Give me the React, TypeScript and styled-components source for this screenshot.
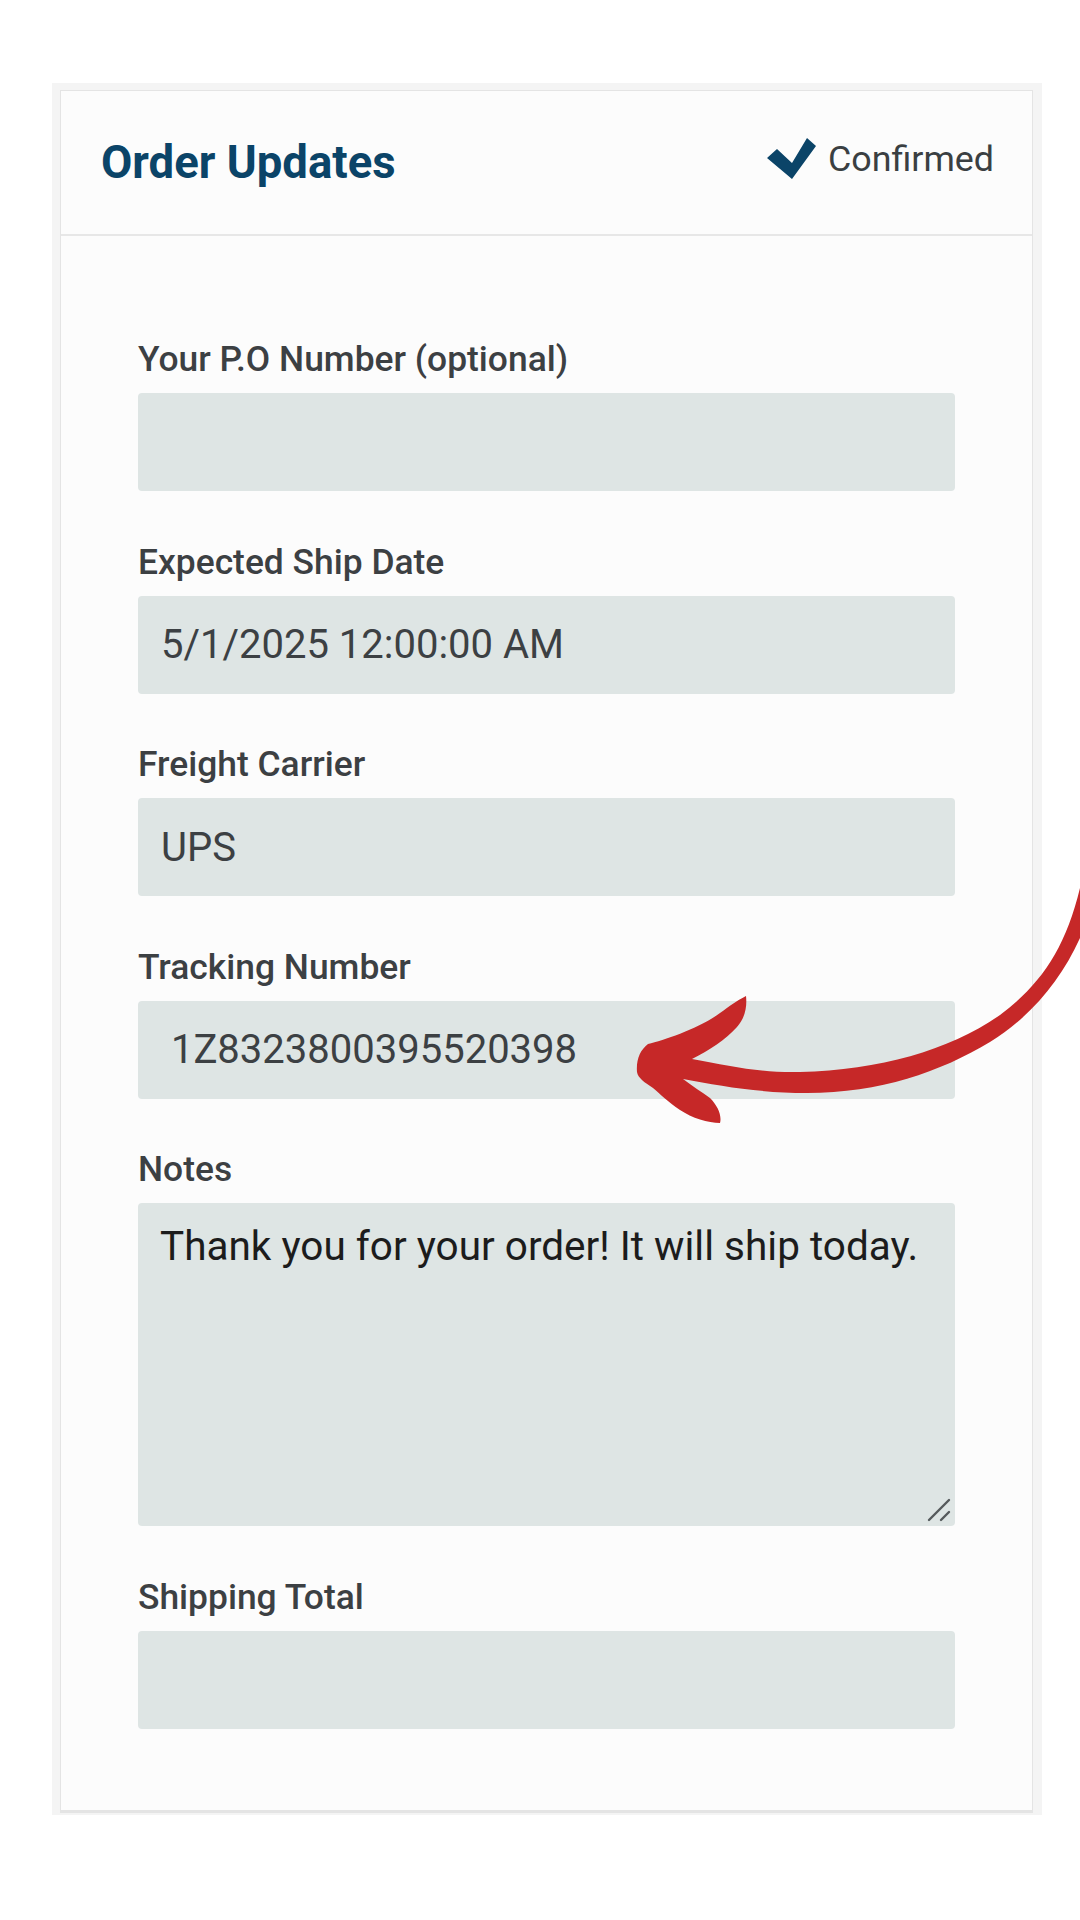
import React from 'react';
import styled, { createGlobalStyle } from 'styled-components';

const GlobalStyle = createGlobalStyle`
  html, body {
    margin: 0;
    padding: 0;
    background: #ffffff;
  }
  body {
    font-family: Roboto, "Liberation Sans", Arial, sans-serif;
  }
`;

const Page = styled.div`
  position: relative;
  width: 1080px;
  height: 1920px;
  overflow: hidden;
  padding: 83px 0 0 52px;
  box-sizing: border-box;
`;

const Frame = styled.div`
  width: 990px;
  box-sizing: border-box;
  background: #f4f4f4;
  padding: 7px 9px 2px 8px;
`;

const Card = styled.section`
  background: #fcfcfc;
  border: 1px solid #e4e4e4;
  border-bottom-width: 3px;
  display: flex;
  flex-direction: column;
`;

const Header = styled.header`
  height: 143px;
  display: flex;
  align-items: center;
  justify-content: space-between;
  padding: 0 38px 0 40px;
  border-bottom: 2px solid #e7e7e7;
`;

const Title = styled.h1`
  margin: 0;
  font-size: 45.5px;
  font-weight: 700;
  color: #0b4468;
`;

const Status = styled.div`
  display: flex;
  align-items: center;
  gap: 11px;
  margin-bottom: 8px;
  font-size: 35.8px;
  color: #3a3f42;
`;

const Body = styled.div`
  display: flex;
  flex-direction: column;
  gap: 49.5px;
  padding: 102px 77px 81px 77px;
`;

const Field = styled.div`
  display: flex;
  flex-direction: column;
  gap: 13px;
`;

const Label = styled.label`
  font-size: 35.4px;
  line-height: 42px;
  font-weight: 500;
  color: #3c4043;
`;

const Input = styled.input`
  height: 98px;
  box-sizing: border-box;
  border: none;
  outline: none;
  border-radius: 4px;
  background: #dee5e4;
  padding: 0 23px;
  font-family: Roboto, "Liberation Sans", Arial, sans-serif;
  font-size: 40px;
  color: #3c4043;
`;

const AreaWrap = styled.div`
  position: relative;
`;

const TextArea = styled.textarea`
  display: block;
  width: 100%;
  height: 323px;
  box-sizing: border-box;
  border: none;
  outline: none;
  resize: none;
  border-radius: 4px;
  background: #dee5e4;
  padding: 19px 22px;
  font-family: Roboto, "Liberation Sans", Arial, sans-serif;
  font-size: 40.5px;
  line-height: 48px;
  color: #1c1c1c;
`;

const Handle = styled.svg`
  position: absolute;
  right: 4px;
  bottom: 4px;
`;

const Arrow = styled.svg`
  position: absolute;
  left: 620px;
  top: 880px;
`;

const CheckIcon = () => (
  <svg width="50" height="42" viewBox="0 0 50 42">
    <polygon points="0,20 10,11 25,25 40,0 49,8 25,41" fill="#0b4468" />
  </svg>
);

const App: React.FC = () => {
  return (
    <Page>
      <GlobalStyle />
      <Frame>
        <Card>
          <Header>
            <Title>Order Updates</Title>
            <Status>
              <CheckIcon />
              <span>Confirmed</span>
            </Status>
          </Header>
          <Body>
            <Field>
              <Label>Your P.O Number (optional)</Label>
              <Input readOnly value="" />
            </Field>
            <Field>
              <Label>Expected Ship Date</Label>
              <Input readOnly value="5/1/2025 12:00:00 AM" />
            </Field>
            <Field>
              <Label>Freight Carrier</Label>
              <Input readOnly value="UPS" />
            </Field>
            <Field>
              <Label>Tracking Number</Label>
              <Input readOnly value=" 1Z8323800395520398" />
            </Field>
            <Field>
              <Label>Notes</Label>
              <AreaWrap>
                <TextArea readOnly value="Thank you for your order! It will ship today." />
                <Handle width="24" height="24" viewBox="0 0 24 24">
                  <path d="M2 22 L22 2 M14 22 L22 14" stroke="#555a5c" strokeWidth="2.4" strokeLinecap="round" />
                </Handle>
              </AreaWrap>
            </Field>
            <Field>
              <Label>Shipping Total</Label>
              <Input readOnly value="" />
            </Field>
          </Body>
        </Card>
      </Frame>
      <Arrow width="460" height="260" viewBox="0 0 460 260">
        <path
          fill="#c62828"
          d="M17 192 C16 180 20 170 28 164 C45 160 80 148 100 133 C110 126 116 121 126 116 C127 125 126 137 117 147 C105 160 90 170 72 179 C110 186 140 193 180 192 C260 190 330 170 380 135 C420 105 445 70 460 8 L460 58 C440 102 410 137 370 162 C320 192 260 213 187 213 C140 213 100 206 63 199 C72 206 82 212 90 218 C98 226 102 236 100 243 C88 243 72 238 60 230 C48 222 40 214 33 208 C24 202 18 198 17 192 Z"
        />
      </Arrow>
    </Page>
  );
};

export default App;
